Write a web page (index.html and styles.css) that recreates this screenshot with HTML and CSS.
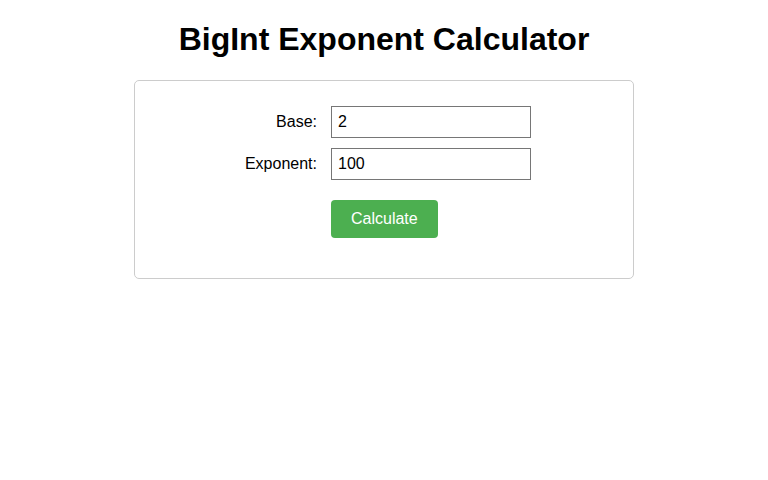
FILE: index.html
```html
<!DOCTYPE html>
<html>
<head>
	<title>BigInt Exponent Calculator</title>
	<link rel="stylesheet" href="styles.css">
</head>
<body>
	<h1>BigInt Exponent Calculator</h1>
	<div class="calc">
		<div class="row">
			<label for="base">Base:</label>
			<input type="text" id="base" value="2">
		</div>
		<div class="row">
			<label for="exp">Exponent:</label>
			<input type="text" id="exp" value="100">
		</div>
		<div class="row btn-row">
			<button id="go">Calculate</button>
		</div>
		<div class="result" id="result"></div>
	</div>
</body>
</html>
```
FILE: styles.css
```css
*{
	margin: 0;
	padding: 0;
	box-sizing: border-box;
}
body{
	font-family: "Liberation Sans", Arial, sans-serif;
	font-size: 16px;
	color: #000;
	background: #fff;
	padding-top: 21px;
}
h1{
	font-size: 32px;
	text-align: center;
	margin-bottom: 22px;
}
.calc{
	width: 500px;
	margin: 0 auto;
	border: 1px solid #ccc;
	border-radius: 5px;
	padding: 25px 20px 40px;
}
.row{
	display: flex;
	align-items: center;
	margin-bottom: 10px;
}
.row label{
	width: 162px;
	text-align: right;
	margin-right: 14px;
}
.row input{
	width: 200px;
	height: 32px;
	padding: 0 6px;
	font-family: inherit;
	font-size: 16px;
	border: 1px solid #767676;
	border-radius: 0;
}
.btn-row{
	margin: 20px 0 0 176px;
}
button{
	background: #4caf50;
	color: #fff;
	border: none;
	border-radius: 4px;
	padding: 10px 20px;
	font-family: inherit;
	font-size: 16px;
	cursor: pointer;
}
```
